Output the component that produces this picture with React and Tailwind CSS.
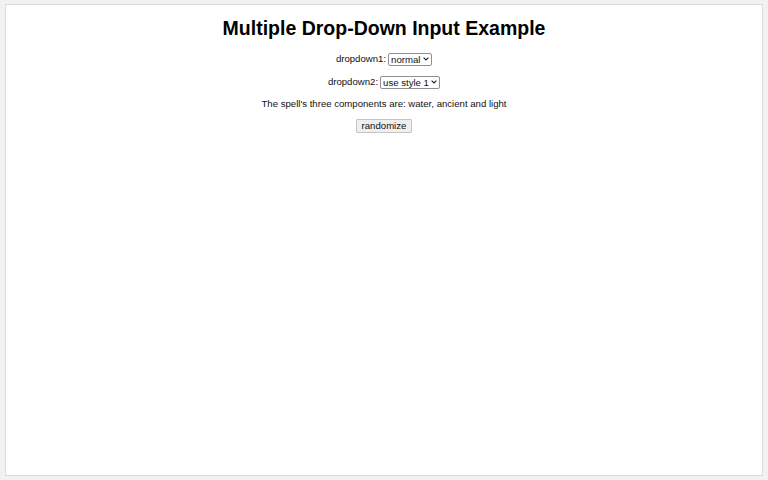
import React, { useState } from 'react';

const parts = ['water', 'ancient', 'light', 'fire', 'earth', 'shadow', 'wind'];

function Dropdown({ options }) {
  return (
    <span className="inline-flex items-center h-[13px] border border-[#8f8f8f] rounded-[2px] bg-white pl-[2px] pr-[2px] gap-[2px]">
      <select className="appearance-none bg-transparent text-[9.6px] leading-[11px] outline-none p-0 m-0">
        {options.map((o) => (
          <option key={o}>{o}</option>
        ))}
      </select>
      <svg width="6" height="4" viewBox="0 0 6 4" className="shrink-0">
        <path d="M0.6 0.6 L3 3 L5.4 0.6" fill="none" stroke="#222" strokeWidth="1.1" />
      </svg>
    </span>
  );
}

export default function App() {
  const [spell, setSpell] = useState(['water', 'ancient', 'light']);

  const randomize = () => {
    const pick = () => parts[Math.floor(Math.random() * parts.length)];
    setSpell([pick(), pick(), pick()]);
  };

  return (
    <div className="w-[768px] h-[480px] bg-[#f2f2f2] p-[4px_5px_4px_5px] font-['Liberation_Sans',Arial,sans-serif]">
      <div className="h-full bg-white border border-[#dcdcdc] flex flex-col items-center text-[#111]">
        <h1 className="mt-[11px] text-[19.5px] leading-[24px] font-bold text-black">Multiple Drop-Down Input Example</h1>
        <div className="mt-[12px] flex items-center gap-[2px] text-[9.6px] leading-[14px]">
          <label>dropdown1:</label>
          <Dropdown options={['normal', 'bold']} />
        </div>
        <div className="mt-[9px] flex items-center gap-[2px] text-[9.6px] leading-[14px]">
          <label>dropdown2:</label>
          <Dropdown options={['use style 1', 'use style 2']} />
        </div>
        <p className="mt-[8px] text-[9.6px] leading-[14px]">
          The spell's three components are: {spell[0]}, {spell[1]} and {spell[2]}
        </p>
        <button
          onClick={randomize}
          className="mt-[8px] h-[14px] w-[56px] text-[9.6px] leading-[12px] bg-[#efefef] border border-[#c4c4c4] rounded-[1px]"
        >
          randomize
        </button>
      </div>
    </div>
  );
}
